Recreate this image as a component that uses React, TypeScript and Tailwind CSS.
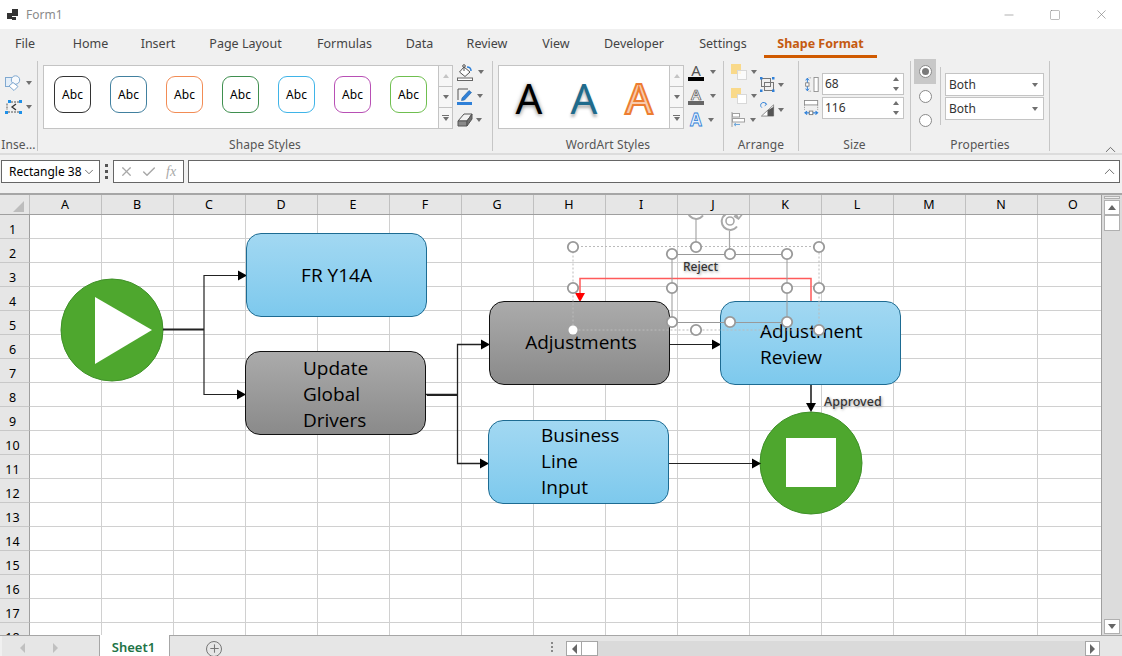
import { ChevronDown, ChevronUp, X, Check, Minus, Square, Plus } from "lucide-react";

const tabs = [
  { label: "File", cls: "w-[55px] pr-[5px]" },
  { label: "Home", cls: "w-[71px]" },
  { label: "Insert", cls: "w-[64px]" },
  { label: "Page Layout", cls: "w-[111px]" },
  { label: "Formulas", cls: "w-[87px]" },
  { label: "Data", cls: "w-[63px]" },
  { label: "Review", cls: "w-[72px]" },
  { label: "View", cls: "w-[66px]" },
  { label: "Developer", cls: "w-[90px]" },
  { label: "Settings", cls: "w-[85px] pl-[3px]" },
];

const abcColors = [
  "border-[#333333]",
  "border-[#41809f]",
  "border-[#f28c55]",
  "border-[#3f8f4f]",
  "border-[#3fb4e8]",
  "border-[#b84fb5]",
  "border-[#6fbf4f]",
];

const columns = ["A", "B", "C", "D", "E", "F", "G", "H", "I", "J", "K", "L", "M", "N", "O"];
const rows = Array.from({ length: 18 }, (_, i) => i + 1);

// Small dropdown triangle used all over the ribbon
function Caret({ className = "" }: { className?: string }) {
  return <span className={`inline-block w-0 h-0 border-x-[3.5px] border-t-[4px] border-x-transparent border-t-[#707070] ${className}`} />;
}

function ScrollButtons() {
  return (
    <div className="w-[14px] h-full flex flex-col border-l border-[#c4c4c4] bg-[#f6f6f6]">
      <div className="flex-1 flex items-center justify-center border-b border-[#c4c4c4]">
        <span className="w-0 h-0 border-x-[3.5px] border-b-[4px] border-x-transparent border-b-[#c4c4c4]" />
      </div>
      <div className="flex-1 flex items-center justify-center border-b border-[#c4c4c4]">
        <Caret />
      </div>
      <div className="flex-1 flex flex-col items-center justify-center gap-[1px]">
        <span className="w-[7px] h-[1px] bg-[#707070]" />
        <Caret />
      </div>
    </div>
  );
}

function ShapesIcon() {
  return (
    <svg width="16" height="16" viewBox="0 0 16 16" fill="none">
      <rect x="0.5" y="2.5" width="9" height="9" fill="#e4eef8" stroke="#7fa8d0" />
      <circle cx="10.5" cy="5" r="4.2" fill="#f6f9fc" stroke="#7fa8d0" />
      <path d="M8 7.5 L13 11.5 L9 15.5 L4 11 Z" fill="#fff" stroke="#7fa8d0" />
    </svg>
  );
}

function EditShapeIcon() {
  return (
    <svg width="17" height="14" viewBox="0 0 17 14" fill="none">
      <path d="M3 2 H14 M3 12 H14 M2 3.5 V10" stroke="#555" strokeDasharray="2 1" />
      <path d="M11 4 L7 7 L11 10" stroke="#333" strokeWidth="1.3" />
      <rect x="0" y="11" width="3" height="3" fill="#1e90e8" />
      <rect x="14" y="11" width="3" height="3" fill="#1e90e8" />
      <rect x="14" y="0" width="3" height="3" fill="#1e90e8" />
      <rect x="3" y="0" width="3" height="3" fill="#1e90e8" />
    </svg>
  );
}

function FillIcon() {
  return (
    <svg width="16" height="17" viewBox="0 0 16 17" fill="none">
      <path d="M7 3 L13 8 L8 12.5 L2.5 8 Z" fill="#fff" stroke="#555" />
      <circle cx="7" cy="2" r="1.3" stroke="#555" />
      <path d="M7 3 V7" stroke="#555" />
      <path d="M10 3 Q14 3 14 7" stroke="#2f80d8" strokeWidth="1.5" />
      <rect x="0.5" y="14" width="15" height="2.5" fill="#fff" stroke="#666" />
    </svg>
  );
}

function OutlineIcon() {
  return (
    <svg width="16" height="17" viewBox="0 0 16 17" fill="none">
      <path d="M1 12 V1 H11" stroke="#555" />
      <path d="M5 10 L12 2.5 L14.5 4.5 L7.5 12 L4.5 12.5 Z" fill="#2f80d8" stroke="#1f5f9f" strokeWidth="0.6" />
      <rect x="0" y="14" width="15" height="3" fill="#2f80d8" />
    </svg>
  );
}

function EraserIcon() {
  return (
    <svg width="16" height="14" viewBox="0 0 16 14" fill="none">
      <path d="M1 8 L7 1 H15 L10 8 Z" fill="#f2f2f2" stroke="#555" />
      <path d="M1 8 H10 V13 H1 Z" fill="#8a8a8a" stroke="#555" />
      <path d="M10 8 L15 1 V6 L10 13 Z" fill="#707070" stroke="#555" />
    </svg>
  );
}

function ForwardIcon() {
  return (
    <svg width="16" height="16" viewBox="0 0 16 16" fill="none">
      <rect x="0" y="0" width="10" height="10" fill="#f9d98a" />
      <rect x="6.5" y="6.5" width="9" height="9" fill="#fff" fillOpacity="0.75" stroke="#d8d8d8" />
    </svg>
  );
}

function BackwardIcon() {
  return (
    <svg width="16" height="16" viewBox="0 0 16 16" fill="none">
      <rect x="0" y="0" width="10" height="10" fill="#f9d98a" />
      <rect x="6.5" y="6.5" width="9" height="9" fill="#fff" stroke="#d8d8d8" />
    </svg>
  );
}

function AlignIcon() {
  return (
    <svg width="15" height="15" viewBox="0 0 15 15" fill="none">
      <path d="M1 0 V15" stroke="#a0a0a0" />
      <rect x="1.5" y="1.5" width="7" height="3.5" fill="#fff" stroke="#a0a0a0" />
      <rect x="1.5" y="6.5" width="12" height="3.5" fill="#fff" stroke="#a0a0a0" />
      <path d="M9 12.5 H3 M5 11 L3 12.5 L5 14" stroke="#6fa8dc" />
    </svg>
  );
}

function GroupIcon() {
  return (
    <svg width="15" height="15" viewBox="0 0 15 15" fill="none">
      <rect x="1.5" y="1.5" width="9" height="8" stroke="#777" />
      <rect x="4.5" y="5.5" width="9" height="8" stroke="#777" />
      <rect x="0" y="0" width="2.5" height="2.5" fill="#2f80d8" />
      <rect x="12" y="12.5" width="2.5" height="2.5" fill="#2f80d8" />
      <rect x="0" y="12.5" width="2.5" height="2.5" fill="#2f80d8" />
      <rect x="12" y="0" width="2.5" height="2.5" fill="#2f80d8" />
    </svg>
  );
}

function RotateIcon() {
  return (
    <svg width="15" height="15" viewBox="0 0 15 16" fill="none">
      <path d="M1 15 H14 V3 Z" fill="#fff" stroke="#888" />
      <path d="M7.5 15 H14 V5 L7.5 9 Z" fill="#555" />
      <path d="M6 2.5 A3 3 0 1 0 1.5 6" stroke="#2f80d8" />
      <path d="M5 0.5 L6.5 2.5 L4.5 4" stroke="#2f80d8" />
    </svg>
  );
}

function HeightIcon() {
  return (
    <svg width="15" height="15" viewBox="0 0 17 18" fill="none">
      <path d="M5 1 H9 M5 17 H9" stroke="#888" strokeDasharray="1 1" />
      <path d="M3.5 1.5 V16.5 M1.5 4 L3.5 1.5 L5.5 4 M1.5 14 L3.5 16.5 L5.5 14" stroke="#2f80d8" strokeWidth="1.2" />
      <rect x="1.5" y="7" width="4" height="4" fill="#fff" stroke="#777" />
      <rect x="11.5" y="0.5" width="5" height="17" fill="#fff" stroke="#888" />
    </svg>
  );
}

function WidthIcon() {
  return (
    <svg width="15" height="16" viewBox="0 0 17 18" fill="none">
      <rect x="0.5" y="0.5" width="15" height="5" fill="#fff" stroke="#888" />
      <path d="M0.5 6 V11 M15.5 6 V11" stroke="#888" strokeDasharray="1 1" />
      <path d="M1 14.5 H15.5 M3.5 12.5 L1 14.5 L3.5 16.5 M13 12.5 L15.5 14.5 L13 16.5" stroke="#2f80d8" strokeWidth="1.2" />
      <rect x="6" y="12.5" width="4" height="4" fill="#fff" stroke="#777" />
    </svg>
  );
}

function Spinner() {
  return (
    <div className="flex flex-col gap-[6px] items-center">
      <span className="w-0 h-0 border-x-[3.5px] border-b-[4px] border-x-transparent border-b-[#707070]" />
      <Caret />
    </div>
  );
}

function Radio({ selected = false }: { selected?: boolean }) {
  return (
    <span className="w-[13px] h-[13px] rounded-full border border-[#8a8a8a] bg-white flex items-center justify-center">
      {selected && <span className="w-[7px] h-[7px] rounded-full bg-[#7a7a7a]" />}
    </span>
  );
}

function GroupLabel({ children }: { children: string }) {
  return <div className="absolute left-0 right-0 -bottom-[1px] text-center text-[12px] leading-[15px] text-[#555555] tracking-[0.1px]">{children}</div>;
}

function Ribbon() {
  return (
    <div className="h-[97px] pt-[3px] flex bg-[#f0f0f0] border-b-2 border-[#dcdcdc]">
      {/* Insert Shapes */}
      <div className="relative w-[38px] h-[90px] border-r border-[#c6c6c6] pl-[5px] pt-[14px] flex flex-col gap-[9px]">
        <div className="flex items-center gap-[5px]"><ShapesIcon /><Caret /></div>
        <div className="flex items-center gap-[4px]"><EditShapeIcon /><Caret /></div>
        <GroupLabel>Inse...</GroupLabel>
      </div>

      {/* Shape Styles */}
      <div className="relative w-[455px] h-[90px] border-r border-[#c6c6c6] pl-[5px] pt-[4px] flex">
        <div className="w-[410px] h-[64px] flex border border-[#c4c4c4] bg-white">
          <div className="flex-1 flex pl-[10px] pt-[10px] gap-[19px]">
            {abcColors.map((c) => (
              <div key={c} className={`w-[37px] h-[37px] rounded-[9px] border-[1.5px] ${c} flex items-center justify-center text-[12px] text-black`}>
                Abc
              </div>
            ))}
          </div>
          <ScrollButtons />
        </div>
        <div className="ml-[4px] flex flex-col gap-[6px] -mt-[2px]">
          <div className="h-[18px] flex items-center gap-[5px]"><FillIcon /><Caret /></div>
          <div className="h-[18px] flex items-center gap-[4px]"><OutlineIcon /><Caret /></div>
          <div className="h-[18px] flex items-center gap-[3px]"><EraserIcon /><Caret /></div>
        </div>
        <GroupLabel>Shape Styles</GroupLabel>
      </div>

      {/* WordArt Styles */}
      <div className="relative w-[231px] h-[90px] border-r border-[#c6c6c6] pl-[5px] pt-[4px] flex">
        <div className="w-[186px] h-[64px] flex border border-[#c4c4c4] bg-white">
          <div className="flex-1 flex items-center pl-[15px] gap-[25px] text-[42px]">
            <span className="w-[30px] text-center text-black [text-shadow:0_1px_4px_rgba(0,0,0,0.55)]">A</span>
            <span className="w-[30px] text-center text-[#1f6b8c] [text-shadow:0_3px_3px_rgba(0,0,0,0.3)]">A</span>
            <span className="w-[30px] text-center font-medium text-[#f8cbad] [-webkit-text-stroke:2px_#ed7d31]">A</span>
          </div>
          <ScrollButtons />
        </div>
        <div className="ml-[4px] flex flex-col gap-[6px] -mt-[2px]">
          <div className="h-[18px] flex items-center gap-[6px]">
            <div className="w-[16px] flex flex-col items-center text-[15px] leading-[13px] text-[#555555]">A<span className="w-[16px] h-[4px] bg-black" /></div>
            <Caret />
          </div>
          <div className="h-[18px] flex items-center gap-[6px]">
            <div className="w-[16px] flex flex-col items-center text-[15px] leading-[13px] font-semibold text-white [-webkit-text-stroke:0.7px_#555]">A<span className="w-[16px] h-[4px] bg-[#666666]" /></div>
            <Caret />
          </div>
          <div className="h-[18px] flex items-center gap-[4px]">
            <span className="w-[16px] text-center text-[17px] leading-[18px] font-bold text-[#e8f2fc] [-webkit-text-stroke:0.8px_#2f80d8]">A</span>
            <Caret />
          </div>
        </div>
        <GroupLabel>WordArt Styles</GroupLabel>
      </div>

      {/* Arrange */}
      <div className="relative w-[75px] h-[90px] border-r border-[#c6c6c6] pl-[7px] pt-[3px] flex gap-[3px]">
        <div className="flex flex-col gap-[8px]">
          <div className="flex items-start gap-[4px]"><ForwardIcon /><Caret className="mt-[6px]" /></div>
          <div className="flex items-start gap-[4px]"><BackwardIcon /><Caret className="mt-[6px]" /></div>
          <div className="flex items-center gap-[4px]"><AlignIcon /><Caret /></div>
        </div>
        <div className="flex flex-col gap-[10px] pt-[13px]">
          <div className="flex items-center gap-[3px]"><GroupIcon /><Caret /></div>
          <div className="flex items-center gap-[3px]"><RotateIcon /><Caret /></div>
        </div>
        <GroupLabel>Arrange</GroupLabel>
      </div>

      {/* Size */}
      <div className="relative w-[112px] h-[90px] border-r border-[#c6c6c6] pl-[5px] pt-[12px] flex flex-col gap-[2px]">
        {["68", "116"].map((v, i) => (
          <div key={v} className="flex items-center gap-[3px]">
            {i === 0 ? <HeightIcon /> : <WidthIcon />}
            <div className="w-[82px] h-[22px] flex items-center justify-between border border-[#c4c4c4] bg-white pl-[2px] pr-[4px] text-[12px] text-[#333333]">
              {v}
              <Spinner />
            </div>
          </div>
        ))}
        <GroupLabel>Size</GroupLabel>
      </div>

      {/* Properties */}
      <div className="relative w-[139px] h-[90px] border-r border-[#c6c6c6] pl-[3px] flex">
        <div className="flex flex-col items-center w-[22px]">
          <div className="w-[22px] h-[25px] -mt-[2px] bg-[#c8c8c8] flex items-center justify-center"><Radio selected /></div>
          <div className="h-[24px] flex items-center"><Radio /></div>
          <div className="h-[24px] flex items-center"><Radio /></div>
        </div>
        <div className="ml-[4px] mt-[6px] h-[58px] w-[1px] bg-[#c6c6c6]" />
        <div className="ml-[4px] pt-[12px] flex flex-col gap-[1px]">
          {["Both", "Both"].map((v, i) => (
            <div key={i} className="w-[99px] h-[23px] flex items-center justify-between border border-[#c4c4c4] bg-white pl-[3px] pr-[5px] text-[12px] text-[#333333]">
              {v}
              <Caret />
            </div>
          ))}
        </div>
        <GroupLabel>Properties</GroupLabel>
      </div>

      <div className="ml-auto self-end pr-[3px] -mb-[5px]">
        <ChevronUp size={17} strokeWidth={1.2} className="text-[#555555]" />
      </div>
    </div>
  );
}

function FormulaBar() {
  return (
    <div className="h-[40px] shrink-0 bg-[#f0f0f0] flex items-start pt-[5px] pl-[1px] pr-[2px] border-b-2 border-[#a6a6a6]">
      <div className="w-[99px] h-[23px] flex items-center justify-between border border-[#666666] bg-white pl-[7px] pr-[3px] text-[12px] text-black">
        Rectangle 38
        <ChevronDown size={14} strokeWidth={1.4} className="text-[#555555]" />
      </div>
      <div className="w-[13px] h-[23px] flex flex-col items-center justify-center gap-[3px]">
        <span className="w-[3px] h-[3px] bg-[#555555]" />
        <span className="w-[3px] h-[3px] bg-[#555555]" />
        <span className="w-[3px] h-[3px] bg-[#555555]" />
      </div>
      <div className="w-[71px] h-[23px] flex items-center border border-[#666666] bg-white pl-[5px] gap-[7px] text-[#a8a8a8]">
        <X size={15} strokeWidth={2} />
        <Check size={16} strokeWidth={2.2} />
        <span className="font-['Liberation_Serif',serif] italic text-[14px] ml-[2px]">fx</span>
      </div>
      <div className="ml-[4px] flex-1 h-[23px] flex items-center justify-end border border-[#666666] bg-white pr-[1px]">
        <ChevronUp size={17} strokeWidth={1.2} className="text-[#555555]" />
      </div>
    </div>
  );
}

function ColumnHeader() {
  return (
    <div className="h-[20px] shrink-0 flex bg-[#e6e6e6] border-b border-[#9f9f9f]">
      <div className="w-[30px] shrink-0 flex items-end justify-end pr-[5px] pb-[2px] border-r border-[#c0c0c0]">
        <span className="w-0 h-0 border-l-[11px] border-b-[11px] border-l-transparent border-b-[#bdbdbd]" />
      </div>
      {columns.map((c) => (
        <div key={c} className="w-[72px] shrink-0 flex items-center justify-center pt-[1px] pr-[1px] border-r border-[#c0c0c0] text-[12.5px] text-black">
          {c}
        </div>
      ))}
    </div>
  );
}

function Cells() {
  return (
    <div className="flex flex-col">
      {rows.map((r) => (
        <div key={r} className="h-[24px] shrink-0 flex">
          <div className="w-[30px] shrink-0 flex items-center justify-center pt-[8px] pr-[4px] bg-[#e6e6e6] border-r border-[#9f9f9f] border-b border-b-[#c8c8c8] text-[12.5px] text-black">
            {r}
          </div>
          {columns.map((c) => (
            <div key={c} className="w-[72px] shrink-0 border-r border-b border-[#d0d0d0]" />
          ))}
        </div>
      ))}
    </div>
  );
}

// Boxes on the sheet canvas. Offsets are relative to the top of row 1.
const blueBox = "bg-gradient-to-b from-[#a2d8f2] to-[#7dc9ed] border-[#1d6b92]";
const grayBox = "bg-gradient-to-b from-[#ababab] to-[#8a8a8a] border-[#111111]";

function Shapes() {
  const box = "absolute w-[181px] h-[84px] rounded-[15px] border text-[19px] leading-[26px] text-black font-['Open_Sans',sans-serif]";
  return (
    <>
      <div className={`${box} ${blueBox} left-[246px] top-[18px] flex items-center justify-center`}>FR Y14A</div>
      <div className={`${box} ${grayBox} left-[245px] top-[136px] flex flex-col justify-center pl-[57px] pt-[1px]`}>
        <span>Update</span>
        <span>Global</span>
        <span>Drivers</span>
      </div>
      <div className={`${box} ${grayBox} left-[489px] top-[86px] flex items-center justify-center pl-[3px] pb-[2px]`}>Adjustments</div>
      <div className={`${box} ${blueBox} left-[720px] top-[86px] flex flex-col justify-center pl-[39px] pt-[1px]`}>
        <span>Adjustment</span>
        <span>Review</span>
      </div>
      <div className={`${box} ${blueBox} left-[488px] top-[205px] flex flex-col justify-center pl-[52px] pb-[2px]`}>
        <span>Business</span>
        <span>Line</span>
        <span>Input</span>
      </div>
      <div className="absolute left-[683px] top-[44px] text-[12px] leading-[16px] font-medium text-[#333333] [text-shadow:1px_1px_3px_rgba(0,0,0,0.4)]">Reject</div>
      <div className="absolute left-[824px] top-[179px] text-[12.5px] leading-[16px] font-medium text-[#333333] [text-shadow:1px_1px_3px_rgba(0,0,0,0.4)]">Approved</div>
    </>
  );
}

function Arrow({ x, y, dir, color = "#000" }: { x: number; y: number; dir: "right" | "down"; color?: string }) {
  const pts = dir === "right" ? `${x},${y} ${x - 9},${y - 5} ${x - 9},${y + 5}` : `${x},${y} ${x - 5},${y - 9} ${x + 5},${y - 9}`;
  return <polygon points={pts} fill={color} />;
}

function Connectors() {
  return (
    <svg className="absolute left-0 top-0" width="1101" height="420" viewBox="0 215 1101 420" fill="none">
      {/* play and stop */}
      <circle cx="112" cy="330" r="51" fill="#4ea72e" stroke="#3f9128" />
      <polygon points="95,297 152,330 95,364" fill="#fff" />
      <circle cx="811" cy="463" r="51" fill="#4ea72e" stroke="#3f9128" />
      <rect x="786" y="438" width="50" height="49" fill="#fff" />
      {/* connectors */}
      <g stroke="#222" strokeWidth="1.2">
        <path d="M163 329.5 H204 V275.5 H240 M204 329.5 V394.5 H240" />
        <path d="M426 394.5 H457.5 V344.5 H483 M457.5 394.5 V463.5 H482" strokeWidth="1.3" />
        <path d="M670 344.5 H714" />
        <path d="M669 463.5 H754" />
        <path d="M811 385 V405" strokeWidth="1.6" />
      </g>
      <path d="M427 395 H457" stroke="#222" strokeWidth="2" />
      <path d="M163 329.5 H204" stroke="#222" strokeWidth="2" />
      <Arrow x={247} y={275.5} dir="right" />
      <Arrow x={246} y={394.5} dir="right" />
      <Arrow x={490} y={344.5} dir="right" />
      <Arrow x={489} y={463.5} dir="right" />
      <Arrow x={721} y={344.5} dir="right" />
      <Arrow x={761} y={463.5} dir="right" />
      <Arrow x={811} y={412} dir="down" />
      <path d="M811 301 V278.5 H580 V294" stroke="#ff5a5a" strokeWidth="1.5" />
      <Arrow x={580} y={302} dir="down" color="#ff0000" />
    </svg>
  );
}

const dashedHandles = [[573, 247], [696, 247], [819, 247], [573, 288], [819, 288], [696, 330], [819, 330]];
const solidHandles = [[672, 254], [730, 254], [787, 254], [672, 288], [787, 288], [672, 322], [730, 322], [787, 322]];

function RotateHandle({ x, y }: { x: number; y: number }) {
  return (
    <g transform={`translate(${x} ${y})`} stroke="#a8a8a8" fill="none">
      <circle r="4" strokeWidth="1.6" />
      <path d="M7 5.5 A8.5 8.5 0 1 1 8 -3" strokeWidth="2" />
      <path d="M4 -5 L8.5 -2 L12 -6.5" strokeWidth="1.6" />
    </g>
  );
}

function Selection() {
  return (
    <svg className="absolute left-0 top-0" width="1101" height="420" viewBox="0 215 1101 420" fill="none">
      <rect x="573" y="246.5" width="246" height="83.5" stroke="#bbbbbb" strokeDasharray="2 2" />
      <rect x="672" y="254.5" width="115" height="68" stroke="#999999" />
      <path d="M696 247 V219 M729.5 254 V231" stroke="#a8a8a8" strokeWidth="1.2" />
      <RotateHandle x={696} y={210} />
      <RotateHandle x={730} y={221} />
      {dashedHandles.concat(solidHandles).map(([cx, cy]) => (
        <circle key={`${cx}-${cy}`} cx={cx} cy={cy} r="5.2" fill="#fff" stroke="#999999" strokeWidth="1.8" />
      ))}
      <circle cx="573" cy="330" r="4.5" fill="#fff" />
    </svg>
  );
}

function VerticalScroll() {
  return (
    <div className="w-[21px] shrink-0 flex flex-col items-center bg-[#dcdcdc] border-l border-[#9f9f9f] pr-[1px]">
      <div className="w-[16px] h-[3px] mt-[1px] border border-[#b0b0b0] bg-[#eeeeee]" />
      <div className="w-[16px] h-[15px] mt-[1px] flex items-center justify-center border border-[#b0b0b0] bg-white">
        <span className="w-0 h-0 border-x-[4px] border-b-[5px] border-x-transparent border-b-[#666666]" />
      </div>
      <div className="w-[16px] h-[16px] border border-[#b0b0b0] bg-white" />
      <div className="mt-auto w-[16px] h-[15px] mb-[1px] flex items-center justify-center border border-[#b0b0b0] bg-white">
        <span className="w-0 h-0 border-x-[4px] border-t-[5px] border-x-transparent border-t-[#666666]" />
      </div>
    </div>
  );
}

function BottomBar() {
  return (
    <div className="h-[21px] shrink-0 flex bg-[#e6e6e6] border-t border-[#a6a6a6]">
      <div className="w-[100px] flex items-center pt-[4px] pl-[18px] gap-[26px] border-l-[2px] border-l-[#f0f0f0] border-r border-r-[#a6a6a6]">
        <span className="w-0 h-0 border-y-[5px] border-r-[5px] border-y-transparent border-r-[#c0c0c0]" />
        <span className="ml-[2px] w-0 h-0 border-y-[5px] border-l-[5px] border-y-transparent border-l-[#c0c0c0]" />
      </div>
      <div className="w-[69px] -mt-[1px] pt-[5px] pr-[2px] bg-white flex items-center justify-center text-[13px] font-semibold text-[#217346]">Sheet1</div>
      <div className="flex-1 flex items-center border-l border-[#a6a6a6]">
        <div className="ml-[36px] w-[16px] h-[16px] mt-[5px] rounded-full border-[1.5px] border-[#777777] flex items-center justify-center">
          <Plus size={13} strokeWidth={2} className="text-[#777777]" />
        </div>
        <div className="ml-[329px] flex flex-col gap-[2px] mt-[2px]">
          <span className="w-[2px] h-[2px] bg-[#888888]" />
          <span className="w-[2px] h-[2px] bg-[#888888]" />
          <span className="w-[2px] h-[2px] bg-[#888888]" />
        </div>
        <div className="ml-[13px] w-[534px] h-[15px] self-end flex bg-[#dadada]">
          <div className="w-[16px] flex items-center justify-center border border-[#a6a6a6] bg-white">
            <span className="w-0 h-0 border-y-[5px] border-r-[5px] border-y-transparent border-r-[#666666]" />
          </div>
          <div className="w-[16px] border border-l-0 border-[#a6a6a6] bg-white" />
          <div className="ml-auto w-[15px] flex items-center justify-center border border-[#a6a6a6] bg-white">
            <span className="w-0 h-0 border-y-[5px] border-l-[5px] border-y-transparent border-l-[#666666]" />
          </div>
        </div>
      </div>
    </div>
  );
}

export default function App() {
  return (
    <div className="w-[1122px] h-[656px] flex flex-col overflow-hidden bg-white font-['Noto_Sans',sans-serif]">
      {/* Title bar */}
      <div className="h-[29px] shrink-0 flex items-center pl-[7px] bg-white">
        <svg width="12" height="11" viewBox="0 0 12 11" fill="#333333">
          <rect x="0" y="4" width="5" height="6" />
          <rect x="5" y="0" width="6" height="7" />
          <rect x="5" y="8" width="4" height="3" />
        </svg>
        <span className="ml-[7px] text-[12px] text-[#8a8a8a]">Form1</span>
        <div className="ml-auto flex items-center text-[#7a7a7a]">
          <Minus size={14} strokeWidth={1} />
          <Square size={12} strokeWidth={1} className="ml-[33px]" />
          <X size={15} strokeWidth={1} className="ml-[33px] mr-[13px]" />
        </div>
      </div>

      {/* Tabs */}
      <div className="h-[29px] shrink-0 flex bg-[#f0f0f0]">
        {tabs.map((t) => (
          <div key={t.label} className={`${t.cls} shrink-0 flex items-center justify-center pt-[1px] text-[12.5px] text-[#444444]`}>
            {t.label}
          </div>
        ))}
        <div className="w-[113px] shrink-0 flex items-center justify-center pt-[4px] border-b-[3px] border-[#d05a00] text-[12.5px] font-bold text-[#c55a11]">
          Shape Format
        </div>
      </div>

      <Ribbon />
      <FormulaBar />

      {/* Sheet */}
      <div className="flex-1 min-h-0 flex">
        <div className="flex-1 min-w-0 flex flex-col overflow-hidden">
          <ColumnHeader />
          <div className="relative flex-1 min-h-0 overflow-hidden">
            <Cells />
            <Connectors />
            <Shapes />
            <Selection />
          </div>
        </div>
        <VerticalScroll />
      </div>

      <BottomBar />
    </div>
  );
}
